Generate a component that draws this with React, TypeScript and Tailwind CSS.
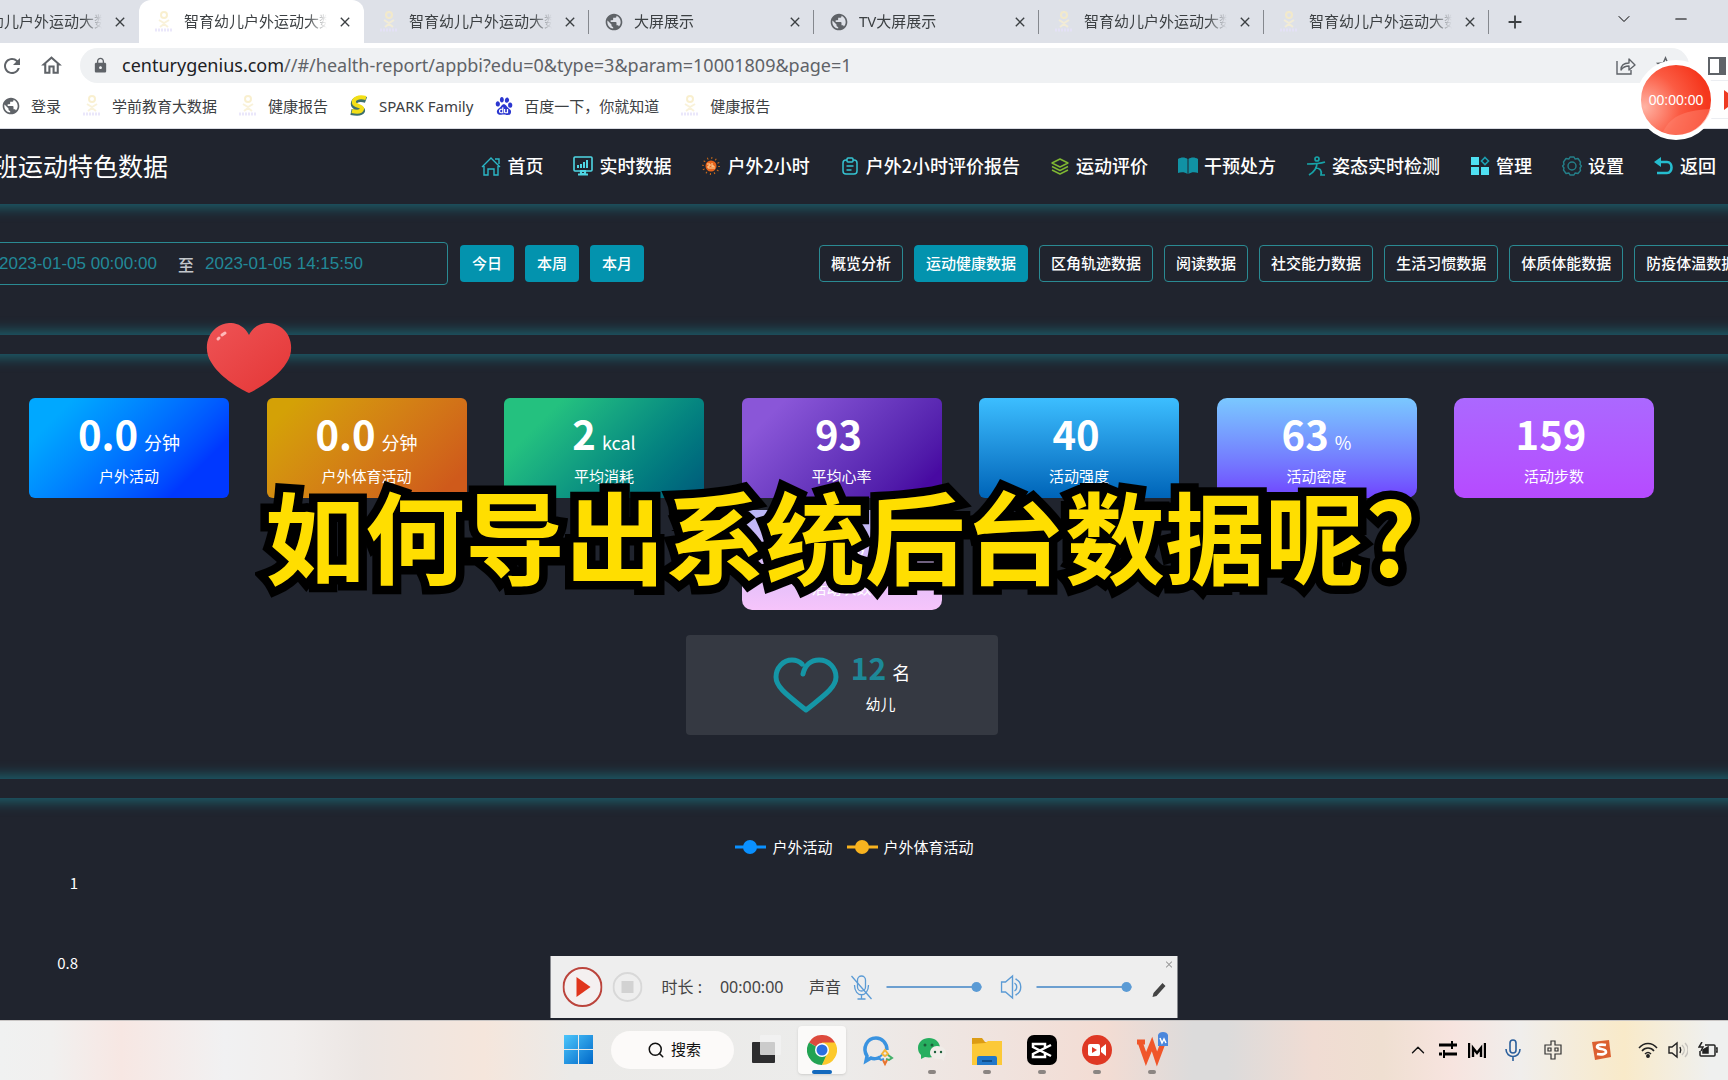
import type { ReactNode } from 'react';
import {
  MdClose,
  MdAdd,
  MdLock,
  MdPublic,
  MdRefresh,
  MdOutlineHome,
  MdStarBorder,
} from 'react-icons/md';
import { SiBaidu } from 'react-icons/si';
import { ChevronDown, ChevronUp, Minus, Search } from 'lucide-react';

type Tab = { title: string; icon: 'site' | 'globe'; active?: boolean; divider?: boolean };

const SITE_TITLE = '智育幼儿户外运动大数据';

const TABS: Tab[] = [
  { title: SITE_TITLE, icon: 'site' },
  { title: SITE_TITLE, icon: 'site', active: true },
  { title: SITE_TITLE, icon: 'site', divider: true },
  { title: '大屏展示', icon: 'globe', divider: true },
  { title: 'TV大屏展示', icon: 'globe', divider: true },
  { title: SITE_TITLE, icon: 'site', divider: true },
  { title: SITE_TITLE, icon: 'site', divider: true },
];

function SiteIcon() {
  return (
    <svg width="20" height="22" viewBox="0 0 20 22" fill="none" className="shrink-0 opacity-80">
      <circle cx="10" cy="4" r="3" stroke="#f8ecc4" strokeWidth="2" />
      <path d="M5 9l5 3 5-3M10 11v4M6 16l4-3 4 3" stroke="#f8efd2" strokeWidth="2" />
      <path d="M1 19h18" stroke="#e6e2fa" strokeWidth="3" strokeDasharray="2 1" />
    </svg>
  );
}

function SparkIcon() {
  return (
    <svg width="20" height="22" viewBox="0 0 20 22" fill="none" className="shrink-0">
      <path
        d="M17 3C9 0 4 4 5 8c1 3 9 3 8 6-1 2-6 2-11 1"
        stroke="#3d6f6d"
        strokeWidth="6"
        transform="translate(0 2)"
      />
      <path d="M17 3C9 1 4 4 5 8c1 3 9 3 8 6-1 3-6 3-10 2" stroke="#f3df16" strokeWidth="4" />
    </svg>
  );
}

function BrowserTabs() {
  return (
    <div className="flex h-[43px] shrink-0 items-stretch bg-[#dee1e8] text-[#3c4043]">
      <div className="-ml-[86px] flex">
        {TABS.map((tab, i) => (
          <div
            key={i}
            className={[
              'relative flex w-[225px] items-center pl-[15px]',
              tab.active ? 'rounded-t-xl bg-white' : '',
            ].join(' ')}
          >
            {tab.icon === 'site' ? (
              <SiteIcon />
            ) : (
              <MdPublic size={20} className="shrink-0 text-[#5f6368]" />
            )}
            <span className="ml-[10px] w-[143px] overflow-hidden text-[15px] whitespace-nowrap [mask-image:linear-gradient(to_right,black_86%,transparent)]">
              {tab.title}
            </span>
            <button aria-label="关闭标签页" className="ml-[10px]">
              <MdClose size={16} />
            </button>
            {tab.divider && (
              <span className="absolute top-[10px] right-0 h-6 w-px bg-[#85888e]" />
            )}
          </div>
        ))}
      </div>
      <button aria-label="新标签页" className="ml-[15px]">
        <MdAdd size={22} />
      </button>
      <div className="mr-[38px] ml-auto flex items-center gap-[38px] pb-[6px] text-black">
        <button aria-label="搜索标签页">
          <ChevronDown size={20} strokeWidth={1.2} />
        </button>
        <button aria-label="最小化">
          <Minus size={18} strokeWidth={1.4} />
        </button>
      </div>
    </div>
  );
}

function Toolbar() {
  return (
    <div className="flex h-[45px] shrink-0 items-center bg-white text-[#5f6368]">
      <button aria-label="重新加载">
        <MdRefresh size={24} />
      </button>
      <button aria-label="主页" className="ml-[15px]">
        <MdOutlineHome size={25} />
      </button>
      <div className="ml-4 flex h-[35px] flex-1 items-center rounded-full bg-[#eff1f3] pr-3 pl-3">
        <MdLock size={17} />
        <span className="ml-[13px] text-[18px] whitespace-nowrap">
          <span className="text-[#202124]">centurygenius.com</span>
          //#/health-report/appbi?edu=0&amp;type=3&amp;param=10001809&amp;page=1
        </span>
        <button aria-label="分享" className="ml-auto">
          <svg width="21" height="20" viewBox="0 0 21 20" fill="none" stroke="currentColor" strokeWidth="1.4">
            <path d="M2 5v13h14v-4" />
            <path d="M6 14c0-5 3-7 8-7V3l6 6-6 5v-4c-4 0-6 1-8 4z" strokeLinejoin="round" />
          </svg>
        </button>
        <button aria-label="收藏" className="ml-[18px]">
          <MdStarBorder size={23} />
        </button>
      </div>
      <button aria-label="侧边栏" className="mr-[2px] ml-[19px]">
        <svg width="18" height="18" viewBox="0 0 18 18" fill="none">
          <rect x="1" y="1" width="16" height="16" stroke="#5f6368" strokeWidth="2" />
          <path d="M11 1h6v16h-6z" fill="#5f6368" />
        </svg>
      </button>
    </div>
  );
}

const BOOKMARKS: { label: string; icon: ReactNode }[] = [
  { label: '登录', icon: <MdPublic size={20} className="text-[#5f6368]" /> },
  { label: '学前教育大数据', icon: <SiteIcon /> },
  { label: '健康报告', icon: <SiteIcon /> },
  { label: 'SPARK Family', icon: <SparkIcon /> },
  { label: '百度一下，你就知道', icon: <SiBaidu size={18} className="mx-px text-[#2b36d0]" /> },
  { label: '健康报告', icon: <SiteIcon /> },
];

function BookmarksBar() {
  return (
    <div className="flex h-[41px] shrink-0 items-center gap-[21px] border-b border-[#d9dbe2] bg-white pb-1 pl-px text-[15px] text-[#3c4043]">
      {BOOKMARKS.map((b, i) => (
        <a key={i} href="#" className="flex items-center gap-[10px] whitespace-nowrap">
          {b.icon}
          {b.label}
        </a>
      ))}
    </div>
  );
}

const NAV: { label: string; icon: ReactNode }[] = [
  {
    label: '首页',
    icon: (
      <g stroke="#2bb7c6" strokeWidth="1.4">
        <path d="M1 11L10 2l9 9M3 10v9h4v-6h6v6h4v-9M14 3h4v5" />
      </g>
    ),
  },
  {
    label: '实时数据',
    icon: (
      <g stroke="#4fd6e4" strokeWidth="1.6">
        <rect x="1" y="1" width="18" height="14" rx="1" />
        <path d="M5 12V9M8 12V8M11 12V6M14 12V4" strokeWidth="2" />
        <path d="M8 15h4v3H8zM5 18.500h10" strokeWidth="2.200" />
      </g>
    ),
  },
  {
    label: '户外2小时',
    icon: (
      <g>
        <circle cx="10" cy="10" r="8" stroke="#c96a1a" strokeWidth="2" strokeDasharray="1 3.200" />
        <circle cx="10" cy="10" r="5.500" fill="#e8641c" />
        <path d="M6 8h3v2H7v2h3M11 7v6M11 10h2v3" stroke="#ffd9a0" strokeWidth="1" />
      </g>
    ),
  },
  {
    label: '户外2小时评价报告',
    icon: (
      <g stroke="#35c3d2" strokeWidth="1.500">
        <rect x="3" y="4" width="14" height="14" rx="3" />
        <rect x="7" y="2" width="6" height="4" rx="1" fill="#20242e" />
        <path d="M6.500 10h7M6.500 14h5" />
      </g>
    ),
  },
  {
    label: '运动评价',
    icon: (
      <g stroke="#7fb733" strokeWidth="1.400" strokeLinejoin="round">
        <path d="M10 3l8 4-8 4-8-4z" />
        <path d="M2 10.500l8 4 8-4M2 14l8 4 8-4" />
      </g>
    ),
  },
  {
    label: '干预处方',
    icon: (
      <g fill="#1192a4">
        <path d="M0 3c3-2 7-2 9.500 0v15C7 16 3 16 0 17zM20 3c-3-2-7-2-9.500 0v15c2.500-2 6.500-2 9.500-1z" />
      </g>
    ),
  },
  {
    label: '姿态实时检测',
    icon: (
      <g stroke="#17a3a8" strokeWidth="1.700">
        <circle cx="11" cy="3" r="2" />
        <path d="M1 8c6 0 12 0 18-2M11 7c0 5-3 9-8 12M9 12c5 0 7 2 6 7h4" />
      </g>
    ),
  },
  {
    label: '管理',
    icon: (
      <g fill="#4fe0f2">
        <rect x="1" y="1" width="8" height="8" />
        <rect x="1" y="11" width="8" height="8" />
        <rect x="11" y="11" width="8" height="8" />
        <path d="M15 1.500l3.500 3.500-3.500 3.500L11.500 5z" fill="none" stroke="#1d9fb0" strokeWidth="1.600" />
      </g>
    ),
  },
  {
    label: '设置',
    icon: (
      <g stroke="#247f89" strokeWidth="1.400" strokeLinejoin="round">
        <path d="M8 1h4l1 2 3-.5L18.500 6 18 8.500l1.500 1.500-1.500 2 .5 2.500L16 17.500l-3-.5-1 2H8l-1-2-3 .5L1.500 14l.5-2L.5 10 2 8.500 1.500 6 4 2.500 7 3z" />
        <circle cx="10" cy="10" r="4" />
      </g>
    ),
  },
  {
    label: '返回',
    icon: (
      <g>
        <path d="M0 6l7-5v10z" fill="#25bdcf" />
        <path d="M5 6h8c6 0 6 11 0 11H3" stroke="#25bdcf" strokeWidth="2.600" />
      </g>
    ),
  },
];

function PageHeader() {
  return (
    <header className="flex h-[75px] shrink-0 items-center pb-[2px] text-white">
      <h1 className="-ml-[7px] text-[25px] whitespace-nowrap">班运动特色数据</h1>
      <nav className="ml-auto flex gap-[30px] pr-3">
        {NAV.map((item) => (
          <a
            key={item.label}
            href="#"
            className="flex items-center gap-[6px] text-[18px] font-medium whitespace-nowrap"
          >
            <svg width="20" height="20" viewBox="0 0 20 20" fill="none">
              {item.icon}
            </svg>
            {item.label}
          </a>
        ))}
      </nav>
    </header>
  );
}

const RANGES = ['今日', '本周', '本月'];
const VIEWS = [
  '概览分析',
  '运动健康数据',
  '区角轨迹数据',
  '阅读数据',
  '社交能力数据',
  '生活习惯数据',
  '体质体能数据',
  '防疫体温数据',
];

const PANEL = '-mx-5 shrink-0 px-5 shadow-[inset_0_0_14px_3px_#1b6572]';
const DATE_INPUT =
  "w-[170px] bg-transparent font-['Liberation_Sans',sans-serif] text-[17px] text-[#228998] outline-none";

function FilterPanel() {
  return (
    <section className={`${PANEL} flex h-[131px] items-start pt-[38px] text-[15px] font-medium text-white`}>
      <div className="-ml-5 flex h-[43px] w-[468px] shrink-0 items-center rounded border border-[#2a8a93] pl-[18px]">
        <input aria-label="开始时间" className={DATE_INPUT} defaultValue="2023-01-05 00:00:00" />
        <span className="mr-[11px] ml-[9px] text-[16px] text-[#c3c6cb]">至</span>
        <input aria-label="结束时间" className={DATE_INPUT} defaultValue="2023-01-05 14:15:50" />
      </div>
      <div className="mt-[3px] ml-3 flex shrink-0 gap-[11px]">
        {RANGES.map((r) => (
          <button key={r} className="h-[37px] rounded bg-[#0393ae] px-3">
            {r}
          </button>
        ))}
      </div>
      <div className="mt-[3px] ml-[175px] flex gap-[11px]">
        {VIEWS.map((v, i) => (
          <button
            key={v}
            className={[
              'h-[37px] rounded border px-[11px] whitespace-nowrap',
              i === 1 ? 'border-[#0393ae] bg-[#0393ae]' : 'border-[#2a8a93]',
            ].join(' ')}
          >
            {v}
          </button>
        ))}
      </div>
    </section>
  );
}

type Stat = { value: string; unit?: string; label: string; tone: string };

const STATS: Stat[] = [
  { value: '0.0', unit: '分钟', label: '户外活动', tone: 'rounded-md bg-linear-135 from-[#00a8ff] from-15% to-[#0038ff] to-80%' },
  { value: '0.0', unit: '分钟', label: '户外体育活动', tone: 'rounded-md bg-linear-135 from-[#d4a106] from-10% to-[#cf5a1b] to-90%' },
  { value: '2', unit: 'kcal', label: '平均消耗', tone: 'rounded-md bg-linear-135 from-[#24c17f] from-20% to-[#00607c] to-95%' },
  { value: '93', label: '平均心率', tone: 'rounded-md bg-linear-135 from-[#8a56d8] from-15% to-[#4809a2] to-90%' },
  { value: '40', label: '活动强度', tone: 'rounded-md bg-linear-180 from-[#3cbeff] to-[#0064b8]' },
  { value: '63', unit: '%', label: '活动密度', tone: 'rounded-[10px] bg-linear-180 from-[#7ac8ff] to-[#7040ff]' },
  { value: '159', label: '活动步数', tone: 'rounded-[10px] bg-linear-180 from-[#ab68ff] to-[#b64aff]' },
];

const EXTRA_STAT: Stat = {
  value: '0',
  unit: '次',
  label: '活动次数',
  tone: 'rounded-[10px] bg-linear-180 from-[#bab6f6] to-[#f6c4fb]',
};

function StatCard({ stat }: { stat: Stat }) {
  return (
    <div className={`flex h-[100px] w-[200px] flex-col items-center pt-[7px] text-white ${stat.tone}`}>
      <div className="flex h-[59px] items-baseline gap-[6px]">
        <span className="text-[40px] leading-[56px] font-bold">{stat.value}</span>
        <span className="text-[18px] leading-none">{stat.unit}</span>
      </div>
      <span className="text-[15px] leading-6">{stat.label}</span>
    </div>
  );
}

function StatsPanel() {
  return (
    <section className={`${PANEL} mt-[19px] flex flex-col pt-11 pb-11`}>
      <div className="mr-[74px] ml-[29px] flex flex-col items-center">
        <div className="flex w-full justify-between">
          {STATS.map((s) => (
            <StatCard key={s.label} stat={s} />
          ))}
        </div>
        <div className="mt-3">
          <StatCard stat={EXTRA_STAT} />
        </div>
        <div className="mt-[25px] flex h-[100px] w-[312px] items-center justify-center gap-3 rounded bg-[#353942] text-white">
          <svg width="66" height="56" viewBox="0 0 66 56" fill="none">
            <path
              d="M30 17c2-9 8-14 16-14 10 0 17 8 17 17 0 11-14 20-30 33C17 40 3 31 3 20 3 11 10 3 19 3c4 0 7 1 10 4"
              stroke="#1596a6"
              strokeWidth="5"
              strokeLinecap="round"
              strokeLinejoin="round"
            />
          </svg>
          <div className="flex flex-col items-center pb-1">
            <div className="flex h-[42px] items-baseline gap-[6px]">
              <span className="text-[30px] leading-[34px] font-bold text-[#1d8898]">12</span>
              <span className="text-[18px] leading-none">名</span>
            </div>
            <span className="text-[15px] leading-6">幼儿</span>
          </div>
        </div>
      </div>
    </section>
  );
}

const SERIES = [
  { name: '户外活动', color: '#0a90ff' },
  { name: '户外体育活动', color: '#f8b31f' },
];

function ChartPanel() {
  return (
    <section className={`${PANEL} mt-[19px] -mb-10 flex-1 pt-[37px] text-[15px] leading-6 text-white`}>
      <div className="mr-[19px] flex justify-center gap-[14px]">
        {SERIES.map((s) => (
          <span key={s.name} className="flex items-center gap-[6px]">
            <svg width="31" height="16" viewBox="0 0 31 16">
              <path d="M0 8h31" stroke={s.color} strokeWidth="3" />
              <circle cx="15" cy="8" r="7" fill={s.color} />
            </svg>
            {s.name}
          </span>
        ))}
      </div>
      <div className="mt-3 flex w-[78px] flex-col gap-14 text-right">
        <span>1</span>
        <span>0.8</span>
      </div>
    </section>
  );
}

function Recorder() {
  return (
    <div className="absolute bottom-[62px] left-1/2 flex h-[62px] w-[627px] -translate-x-1/2 items-center bg-[#eeeeee] pl-3 text-[16px] text-[#444]">
      <button aria-label="开始录制">
        <svg width="40" height="40" viewBox="0 0 40 40">
          <circle cx="20" cy="20" r="19" fill="#f4f0f0" stroke="#bb443c" strokeWidth="2" />
          <path d="M14 10l14 10-14 10z" fill="#e0351c" />
        </svg>
      </button>
      <button aria-label="停止" className="ml-[10px]">
        <svg width="30" height="30" viewBox="0 0 30 30">
          <circle cx="15" cy="15" r="14" fill="none" stroke="#d8d8d8" strokeWidth="2" />
          <path d="M9 9h12v12H9z" fill="#d2d2d2" />
        </svg>
      </button>
      <span className="ml-[19px]">时长 :</span>
      <span className="ml-[18px] w-[70px]">00:00:00</span>
      <span className="ml-[19px]">声音</span>
      <svg width="22" height="26" viewBox="0 0 22 26" fill="none" stroke="#5b9bd5" strokeWidth="1.3" className="ml-[10px]">
        <rect x="7" y="2" width="8" height="15" rx="4" />
        <path d="M4 11c0 13 14 13 14 0M11 21v4M7 25h8M1 2l20 23" />
      </svg>
      <VolumeSlider label="麦克风音量" />
      <svg width="22" height="26" viewBox="0 0 22 26" fill="none" stroke="#5b9bd5" strokeWidth="1.4" className="ml-[19px]">
        <path d="M1 8h4l7-6v22l-7-6H1zM14 9c3 2 3 6 0 8M15 5c7 3 7 13 0 16" />
      </svg>
      <VolumeSlider label="扬声器音量" />
      <button aria-label="标注" className="mt-[6px] ml-5">
        <svg width="16" height="16" viewBox="0 0 16 16" fill="#444">
          <path d="M1 15l1-4 9-10 3 3L5 14zM12 0l3 3" />
        </svg>
      </button>
      <button aria-label="关闭" className="absolute top-[3px] right-[3px] text-[#999]">
        <MdClose size={11} />
      </button>
    </div>
  );
}

function VolumeSlider({ label }: { label: string }) {
  return (
    <input
      type="range"
      aria-label={label}
      defaultValue={100}
      className="ml-[14px] h-[10px] w-[95px] appearance-none bg-[linear-gradient(#6c9fd0,#6c9fd0)] bg-[length:100%_2px] bg-center bg-no-repeat [&::-webkit-slider-thumb]:size-[10px] [&::-webkit-slider-thumb]:appearance-none [&::-webkit-slider-thumb]:rounded-full [&::-webkit-slider-thumb]:bg-[#5b9bd5]"
    />
  );
}

const APPS: { name: string; running?: boolean; icon: ReactNode }[] = [
  {
    name: '企业微信',
    icon: (
      <g fill="none" strokeWidth="3.500">
        <path d="M18 22c-2 2-7 2-9 1l-5 3 1-5C0 13 5 3 14 3c6 0 11 5 11 12" stroke="#3a93e0" />
        <path d="M23 15l3 4-3 2-3-2z" stroke="#f3b53a" strokeWidth="2" />
        <path d="M20 20l-4 3 3 2 3-1" stroke="#3a93e0" strokeWidth="2" />
        <path d="M26 20l4 3-3 2-3-1" stroke="#45b06a" strokeWidth="2" />
        <path d="M21 25l2 4 2-4" stroke="#e8742e" strokeWidth="2" />
      </g>
    ),
  },
  {
    name: '微信',
    running: true,
    icon: (
      <g>
        <path d="M12 3C6 3 1 7 1 13c0 3 1 5 3 7v4l4-2c9 2 15-3 15-9S18 3 12 3z" fill="#27ae5f" />
        <path d="M20 11c6 0 9 3 9 7 0 2-1 4-2 5v3l-3-2c-6 1-11-2-11-6s3-7 7-7z" fill="#f0ece8" />
        <g fill="#1b5f3a">
          <circle cx="8" cy="10" r="1.500" />
          <circle cx="15" cy="10" r="1.500" />
          <circle cx="18" cy="17" r="1.200" />
          <circle cx="24" cy="17" r="1.200" />
        </g>
      </g>
    ),
  },
  {
    name: '文件资源管理器',
    running: true,
    icon: (
      <g>
        <path d="M0 3h10l3 4h17v6H0z" fill="#dc9c14" />
        <path d="M0 9l13-1 3-2h14v24H0z" fill="#fcc938" />
        <path d="M5 30v-7q0-2 2-2h16q2 0 2 2v7z" fill="#2277c9" />
        <path d="M10 25h10v2H10z" fill="#10508f" />
      </g>
    ),
  },
  {
    name: '剪映',
    running: true,
    icon: (
      <g>
        <rect width="30" height="30" rx="7" fill="#000" />
        <path d="M18 13V9H6v3l18 9M18 17v5H6v-3l18-9" fill="none" stroke="#fff" strokeWidth="2.500" />
      </g>
    ),
  },
  {
    name: '录屏',
    running: true,
    icon: (
      <g>
        <circle cx="15" cy="15" r="15" fill="#df3824" />
        <rect x="6" y="9" width="12" height="12" rx="2" fill="#fff" />
        <path d="M19 13l5-4v12l-5-4z" fill="#fff" />
        <path d="M10 12l5 3-5 3z" fill="#df3824" />
      </g>
    ),
  },
  {
    name: 'WPS',
    running: true,
    icon: (
      <g>
        <path d="M0 7h8M3 7l6 17 6-15 5 15 6-16" fill="none" stroke="#f0562a" strokeWidth="5" />
        <path d="M21 0q1-3 5-3t5 3v11H21z" fill="#4b87dc" />
        <path d="M23 3l2 5 2-4 2 4" fill="none" stroke="#fff" strokeWidth="1.500" />
      </g>
    ),
  },
];

function Taskbar() {
  return (
    <footer className="z-10 grid h-[60px] shrink-0 grid-cols-[1fr_auto_1fr] items-center border-t border-[#c9c6c5] bg-[linear-gradient(to_right,#f0f1f1_0%,#f1f0ef_3%,#f7e7e3_7%,#f1f1f2_13%,#f1eeed_17%,#ece6e3_21%,#f5e6dc_28%,#ebeae8_33%,#ececeb_48%,#f0e3de_58%,#f3dcd3_64%,#dcdbdb_69%,#dcdbdb_71%,#f0dcd3_76%,#efdfd1_80%,#f7e4df_84%,#f0eeec_88%,#f9eac9_94%,#eff0ef_99%)] pb-[2px]">
      <div />
      <div className="flex items-center pl-[2px]">
        <button aria-label="开始">
          <svg width="29" height="29" viewBox="0 0 29 29">
            <defs>
              <linearGradient id="win" x1="0" y1="0" x2="1" y2="1">
                <stop stopColor="#4cc6fb" />
                <stop offset="1" stopColor="#0068c9" />
              </linearGradient>
            </defs>
            <path d="M0 0h14v14H0zM15 0h14v14H15zM0 15h14v14H0zM15 15h14v14H15z" fill="url(#win)" />
          </svg>
        </button>
        <button className="ml-[18px] flex h-[38px] w-[123px] items-center justify-center gap-[6px] rounded-full bg-[#fcfaf9] pl-1 text-[15px] text-[#111]">
          <Search size={18} strokeWidth={2} />
          搜索
        </button>
        <button aria-label="任务视图" className="ml-[18px]">
          <svg width="30" height="29" viewBox="0 0 30 29">
            <rect y="7" width="23" height="21" rx="1" fill="#2d2d2f" />
            <rect x="8" width="21" height="20" rx="1" fill="#f3f3f3" fillOpacity="0.8" />
          </svg>
        </button>
        <button
          aria-label="Google Chrome"
          className="ml-4 flex h-12 w-12 flex-col items-center rounded bg-[#fbfaf9] pt-[9px] shadow-sm"
        >
          <svg width="30" height="30" viewBox="0 0 30 30">
            <path d="M15 15L2 7.500A15 15 0 0 1 28 7.500z" fill="#dd4a3d" />
            <path d="M15 15L2 7.500A15 15 0 0 0 15 30l6.500-11.200z" fill="#22a353" />
            <path d="M15 15h6.500L15 30A15 15 0 0 0 28 7.500H15z" fill="#fcc92c" />
            <circle cx="15" cy="15" r="7" fill="#fff" />
            <circle cx="15" cy="15" r="5.500" fill="#2b6fe0" />
          </svg>
          <span className="mt-[5px] h-[4px] w-5 rounded-full bg-[#1268bd]" />
        </button>
        <div className="ml-4 flex gap-[25px]">
          {APPS.map((app) => (
            <button key={app.name} aria-label={app.name} className="flex flex-col items-center pt-[9px]">
              <svg width="30" height="30" viewBox="0 0 30 30" className="overflow-visible">
                {app.icon}
              </svg>
              <span
                className={`mt-[5px] h-[4px] w-2 rounded-full ${app.running ? 'bg-[#8b8582]' : ''}`}
              />
            </button>
          ))}
        </div>
      </div>
      <div className="flex items-center justify-end pr-[10px] text-[#111]">
        <ChevronUp size={22} strokeWidth={1.500} />
        <svg width="18" height="18" viewBox="0 0 18 18" stroke="#000" strokeWidth="3" className="ml-[10px]">
          <path d="M0 4h12M14 4h4M0 13h3M6 13h12" />
          <path d="M13 0v8M5 9v8" strokeWidth="2" />
        </svg>
        <svg width="18" height="16" viewBox="0 0 18 16" fill="none" stroke="#000" strokeWidth="2.400" className="ml-[11px]">
          <path d="M1 1v15M17 1v15M5 15V6l4 5 4-5v9" />
        </svg>
        <svg width="16" height="22" viewBox="0 0 16 22" fill="none" stroke="#2b5f9c" strokeWidth="1.600" className="ml-[19px]">
          <rect x="5" y="1" width="6" height="13" rx="3" />
          <path d="M1 10c0 10 14 10 14 0M8 18v4" />
        </svg>
        <svg width="18" height="20" viewBox="0 0 18 20" fill="none" stroke="#333" strokeWidth="1.200" className="ml-[23px]">
          <path d="M7 1h4v4h6v9h-6v5H7v-5H1V5h6zM4 8h3v3H4zM11 8h3v3h-3z" />
        </svg>
        <svg width="20" height="20" viewBox="0 0 20 20" fill="none" className="ml-[29px]">
          <path d="M1 2l17-2 2 17-16 3z" fill="#dc6030" />
          <path d="M15 5C9 4 6 5 6 7c1 3 9 1 9 5 0 2-4 3-9 2" stroke="#fff" strokeWidth="2.600" />
        </svg>
        <svg width="20" height="16" viewBox="0 0 20 16" fill="none" stroke="#222" strokeWidth="1.500" className="ml-[27px]">
          <path d="M1 6c5-6 13-6 18 0M4 9c3-4 9-4 12 0M7 12c2-2 4-2 6 0" />
          <circle cx="10" cy="14" r="1.200" fill="#222" />
        </svg>
        <svg width="20" height="18" viewBox="0 0 20 18" fill="none" stroke="#222" strokeWidth="1.400" className="ml-[10px]">
          <path d="M1 6h3l5-4v14l-5-4H1zM12 6c1 2 1 4 0 6" />
          <path d="M14 4c3 3 3 7 0 10M17 2c4 4 4 10 0 14" stroke="#c7c4bf" />
        </svg>
        <svg width="20" height="16" viewBox="0 0 20 16" fill="none" stroke="#222" strokeWidth="1.500" className="ml-[10px]">
          <path d="M7 3h9q1 0 1 1v9q0 1-1 1H3q-1 0-1-1V9M18 6h1v4h-1" />
          <path d="M5 11V8l5-3v6z" fill="#222" />
          <path d="M4 0L1 5h4L3 9" />
        </svg>
      </div>
    </footer>
  );
}

function RecordBubble() {
  return (
    <>
      <div className="absolute top-20 right-0 flex h-[39px] w-12 items-center justify-end border-y border-[#eceef2] bg-white">
        <svg width="4" height="20" viewBox="0 0 4 20">
          <path d="M0 0l4 3v14l-4 3z" fill="#ee3a22" />
        </svg>
      </div>
      <div className="absolute top-[60px] right-[12px] flex size-[80px] items-center justify-center rounded-full border-[5px] border-white bg-[radial-gradient(circle_at_5%_60%,#ffb3a4_0%,#fb5b43_45%,#f5371d_80%)]">
        <svg width="70" height="70" viewBox="0 0 70 70" className="absolute inset-0">
          <path d="M22 67C30 49 48 45 70 44A35 35 0 0 1 22 67z" fill="#ff8a76" fillOpacity="0.450" />
        </svg>
        <span className="relative font-['Liberation_Sans',sans-serif] text-[14px] text-white">00:00:00</span>
      </div>
    </>
  );
}

function HeartSticker() {
  return (
    <svg width="86" height="71" viewBox="0 0 86 71" className="absolute top-[323px] left-[206px]">
      <defs>
        <linearGradient id="heart" x1="0" y1="0" x2="1" y2="1">
          <stop stopColor="#ee5355" />
          <stop offset="1" stopColor="#e43636" />
        </linearGradient>
      </defs>
      <path
        d="M43 12C50-2 66-3 76 5c10 8 12 23 5 34C73 53 54 65 43 70 32 65 13 53 5 39-2 28 0 13 10 5c10-8 26-7 33 7z"
        fill="url(#heart)"
      />
      <path d="M12 16l1-1M16 12l3-2" stroke="#ffb9b9" strokeWidth="3" strokeLinecap="round" />
    </svg>
  );
}

export default function App() {
  return (
    <div className="relative flex h-screen flex-col overflow-hidden bg-[#20242e] font-['Noto_Sans','Noto_Sans_CJK_SC',sans-serif]">
      <BrowserTabs />
      <Toolbar />
      <BookmarksBar />
      <main className="flex min-h-0 flex-1 flex-col overflow-hidden font-['Noto_Sans_CJK_SC',sans-serif]">
        <PageHeader />
        <FilterPanel />
        <StatsPanel />
        <ChartPanel />
      </main>
      <Taskbar />
      <RecordBubble />
      <HeartSticker />
      <Recorder />
      <p className="pointer-events-none absolute top-[461px] left-[265px] font-['Noto_Sans_CJK_SC',sans-serif] text-[100px] leading-[145px] font-bold whitespace-nowrap text-[#ffde00] [-webkit-text-stroke:17px_black] [paint-order:stroke_fill] [stroke-linejoin:round]">
        如何导出系统后台数据呢?
      </p>
    </div>
  );
}
